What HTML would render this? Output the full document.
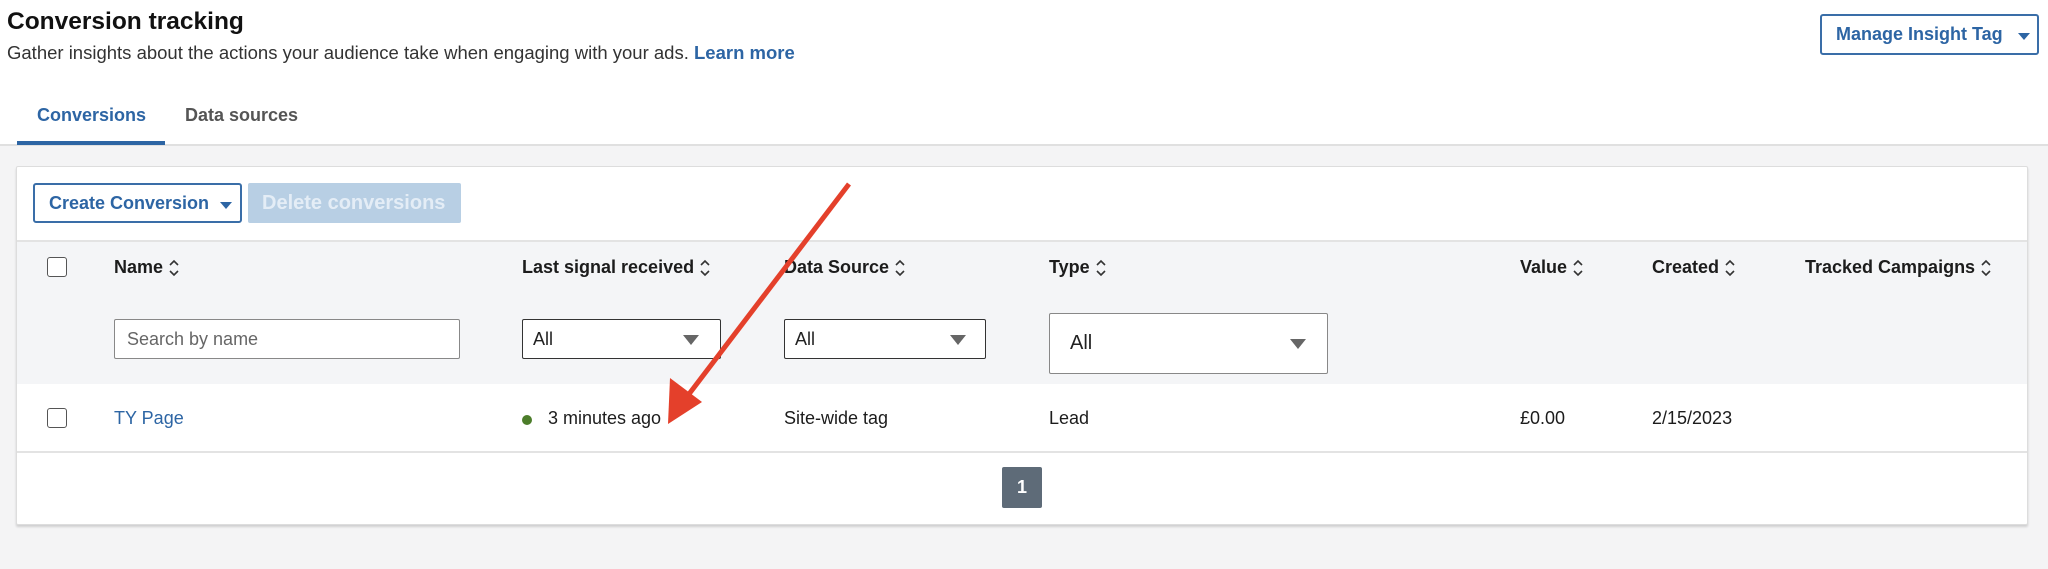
<!DOCTYPE html>
<html><head><meta charset="utf-8"><style>
*{box-sizing:border-box;margin:0;padding:0}
body{width:2048px;height:569px;background:#f4f4f5;font-family:"Liberation Sans",sans-serif;color:#000;position:relative;overflow:hidden;font-size:18px}
.top{position:absolute;left:0;top:0;width:2048px;height:146px;background:#fff;border-bottom:2px solid #e0e0e0}
.abs{position:absolute;white-space:nowrap}
.btn{position:absolute;border:2px solid #3a6ea8;border-radius:3px;color:#2d65a4;font-weight:bold;background:#fff;display:flex;align-items:center;padding-left:14px}
.tri{width:0;height:0;border-left:6px solid transparent;border-right:6px solid transparent;border-top:7px solid #2d65a4;position:absolute}
.card{position:absolute;left:16px;top:166px;width:2012px;height:359px;background:#fff;border:1px solid #ddd;box-shadow:0 2px 2px rgba(0,0,0,.15);border-radius:2px}
.hdr{position:absolute;left:17px;top:240px;width:2010px;height:144px;background:#f4f5f7;border-top:2px solid #e3e3e3}
.h{position:absolute;top:257px;font-weight:bold;font-size:18px;color:#1c1c1c}
.sort{display:inline-block;vertical-align:middle;margin-left:6px}
.cb{position:absolute;width:20px;height:20px;border:1.5px solid #555;border-radius:3px;background:#fff}
.inp{position:absolute;background:#fff;border:1.5px solid #555;border-radius:2px;display:flex;align-items:center;padding-left:12px}
.dd{position:absolute;width:0;height:0;border-left:8px solid transparent;border-right:8px solid transparent;border-top:10px solid #666}
.cell{position:absolute;top:408px;font-size:18px;color:#1c1c1c}
</style></head><body>
<div class="top"></div>
<div class="abs" style="left:7px;top:8px;font-size:24.5px;font-weight:bold;color:#111">Conversion tracking</div>
<div class="abs" style="left:7px;top:42px;font-size:18.5px;color:#333">Gather insights about the actions your audience take when engaging with your ads. <span style="color:#2d65a4;font-weight:bold">Learn more</span></div>
<div class="btn" style="left:1820px;top:14px;width:219px;height:41px;font-size:18px">Manage Insight Tag<span class="tri" style="left:196px;top:17px"></span></div>
<div class="abs" style="left:37px;top:105px;color:#2d65a4;font-weight:bold">Conversions</div>
<div class="abs" style="left:185px;top:105px;color:#555;font-weight:bold">Data sources</div>
<div class="abs" style="left:17px;top:141px;width:148px;height:4px;background:#2d65a4"></div>

<div class="card"></div>
<div class="btn" style="left:33px;top:183px;width:209px;height:40px;font-size:18px">Create Conversion<span class="tri" style="left:185px;top:17px"></span></div>
<div class="abs" style="left:248px;top:183px;width:213px;height:40px;background:#b8cfe4;border-radius:2px;color:#e4edf6;font-weight:bold;font-size:20px;padding:9px 0 0 14px">Delete conversions</div>

<div class="hdr"></div>
<div class="cb" style="left:47px;top:257px"></div>
<div class="h" style="left:114px">Name<svg class="sort" width="10" height="18" viewBox="0 0 10 18"><path d="M1 6l4-4 4 4M1 12l4 4 4-4" fill="none" stroke="#333" stroke-width="1.6"/></svg></div>
<div class="h" style="left:522px">Last signal received<svg class="sort" width="10" height="18" viewBox="0 0 10 18"><path d="M1 6l4-4 4 4M1 12l4 4 4-4" fill="none" stroke="#333" stroke-width="1.6"/></svg></div>
<div class="h" style="left:784px">Data Source<svg class="sort" width="10" height="18" viewBox="0 0 10 18"><path d="M1 6l4-4 4 4M1 12l4 4 4-4" fill="none" stroke="#333" stroke-width="1.6"/></svg></div>
<div class="h" style="left:1049px">Type<svg class="sort" width="10" height="18" viewBox="0 0 10 18"><path d="M1 6l4-4 4 4M1 12l4 4 4-4" fill="none" stroke="#333" stroke-width="1.6"/></svg></div>
<div class="h" style="left:1520px">Value<svg class="sort" width="10" height="18" viewBox="0 0 10 18"><path d="M1 6l4-4 4 4M1 12l4 4 4-4" fill="none" stroke="#333" stroke-width="1.6"/></svg></div>
<div class="h" style="left:1652px">Created<svg class="sort" width="10" height="18" viewBox="0 0 10 18"><path d="M1 6l4-4 4 4M1 12l4 4 4-4" fill="none" stroke="#333" stroke-width="1.6"/></svg></div>
<div class="h" style="left:1805px">Tracked Campaigns<svg class="sort" width="10" height="18" viewBox="0 0 10 18"><path d="M1 6l4-4 4 4M1 12l4 4 4-4" fill="none" stroke="#333" stroke-width="1.6"/></svg></div>

<div class="inp" style="left:114px;top:319px;width:346px;height:40px;color:#666;border-color:#888">Search by name</div>
<div class="inp" style="left:522px;top:319px;width:199px;height:40px;color:#222;padding-left:10px;border-color:#333">All<span class="dd" style="left:160px;top:15px"></span></div>
<div class="inp" style="left:784px;top:319px;width:202px;height:40px;color:#222;padding-left:10px;border-color:#333">All<span class="dd" style="left:165px;top:15px"></span></div>
<div class="inp" style="left:1049px;top:313px;width:279px;height:61px;color:#222;padding-left:20px;font-size:20px;border-color:#888">All<span class="dd" style="left:240px;top:25px"></span></div>

<div class="abs" style="left:17px;top:451px;width:2010px;height:2px;background:#e3e3e3"></div>
<div class="cb" style="left:47px;top:408px"></div>
<div class="cell" style="left:114px;color:#2d65a4">TY Page</div>
<div class="abs" style="left:522px;top:415px;width:10px;height:10px;border-radius:50%;background:#4c7d2a"></div>
<div class="cell" style="left:548px">3 minutes ago</div>
<div class="cell" style="left:784px">Site-wide tag</div>
<div class="cell" style="left:1049px">Lead</div>
<div class="cell" style="left:1520px">£0.00</div>
<div class="cell" style="left:1652px">2/15/2023</div>

<div class="abs" style="left:1002px;top:467px;width:40px;height:41px;background:#5e6b78;border-radius:2px;color:#fff;font-weight:bold;text-align:center;line-height:41px">1</div>

<svg class="abs" style="left:0;top:0" width="2048" height="569">
<line x1="849" y1="184" x2="686" y2="398" stroke="#e4402b" stroke-width="5"/>
<polygon points="668,424 670,378 702,402" fill="#e4402b"/>
</svg>
</body></html>
